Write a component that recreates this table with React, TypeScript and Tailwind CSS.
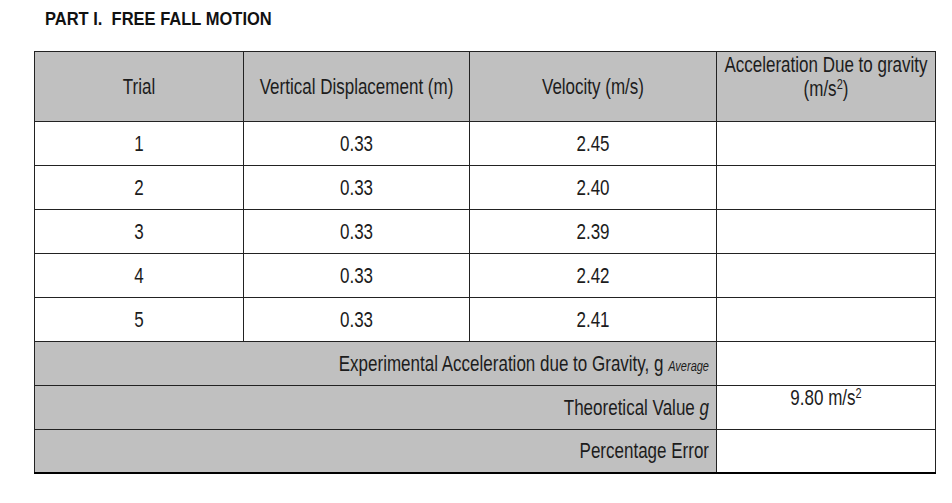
import type { ReactNode } from "react";

const trials = [
  { n: 1, d: "0.33", v: "2.45" },
  { n: 2, d: "0.33", v: "2.40" },
  { n: 3, d: "0.33", v: "2.39" },
  { n: 4, d: "0.33", v: "2.42" },
  { n: 5, d: "0.33", v: "2.41" },
];

// the sheet uses a narrow face; stretch Liberation Sans up to its height
function T({ children }: { children: ReactNode }) {
  return <span className="inline-block leading-none scale-y-[1.28]">{children}</span>;
}

export default function App() {
  return (
    <div className="w-[952px] h-[503px] bg-white text-[#1c1c1c] font-['Liberation_Sans',Arial,sans-serif]">
      <div className="pl-[45px] pt-[8px] text-[16.5px] font-bold leading-[20px] text-[#111]">
        <span className="inline-block scale-y-110">PART I.&nbsp; FREE FALL MOTION</span>
      </div>
      <table className="ml-[34px] mt-[23px] w-[901px] border-collapse text-[17px] border-b-2 border-b-black table-fixed">
        <colgroup>
          <col className="w-[209px]" />
          <col className="w-[226px]" />
          <col className="w-[247px]" />
          <col className="w-[219px]" />
        </colgroup>
        <thead>
          <tr className="bg-[#c0c0c0]">
            <th className="h-[70px] border border-[#222] font-normal text-center"><T>Trial</T></th>
            <th className="border border-[#222] font-normal text-center"><T>Vertical Displacement (m)</T></th>
            <th className="border border-[#222] font-normal text-center"><T>Velocity (m/s)</T></th>
            <th className="border border-[#222] font-normal text-center align-top pt-[1px] px-0 leading-[24px]">
              <T>Acceleration Due to gravity</T>
              <br />
              <T>
                (m/s<sup className="text-[11px]">2</sup>)
              </T>
            </th>
          </tr>
        </thead>
        <tbody>
          {trials.map((t) => (
            <tr key={t.n}>
              <td className="h-[44px] border border-[#222] text-center"><T>{t.n}</T></td>
              <td className="border border-[#222] text-center"><T>{t.d}</T></td>
              <td className="border border-[#222] text-center"><T>{t.v}</T></td>
              <td className="border border-[#222]"></td>
            </tr>
          ))}
          <tr>
            <td colSpan={3} className="h-[44px] border border-[#222] bg-[#c0c0c0] text-right pr-[7px]">
              <T>
                Experimental Acceleration due to Gravity, g <i className="text-[11px]">Average</i>
              </T>
            </td>
            <td className="border border-[#222]"></td>
          </tr>
          <tr>
            <td colSpan={3} className="h-[44px] border border-[#222] bg-[#c0c0c0] text-right pr-[7px]">
              <T>
                Theoretical Value <i>g</i>
              </T>
            </td>
            <td className="border border-[#222] text-center align-top pt-[2px] leading-[20px]">
              <T>
                9.80 m/s<sup className="text-[11px]">2</sup>
              </T>
            </td>
          </tr>
          <tr>
            <td colSpan={3} className="h-[43px] border border-[#222] bg-[#c0c0c0] text-right pr-[7px]">
              <T>Percentage Error</T>
            </td>
            <td className="border border-[#222]"></td>
          </tr>
        </tbody>
      </table>
    </div>
  );
}
